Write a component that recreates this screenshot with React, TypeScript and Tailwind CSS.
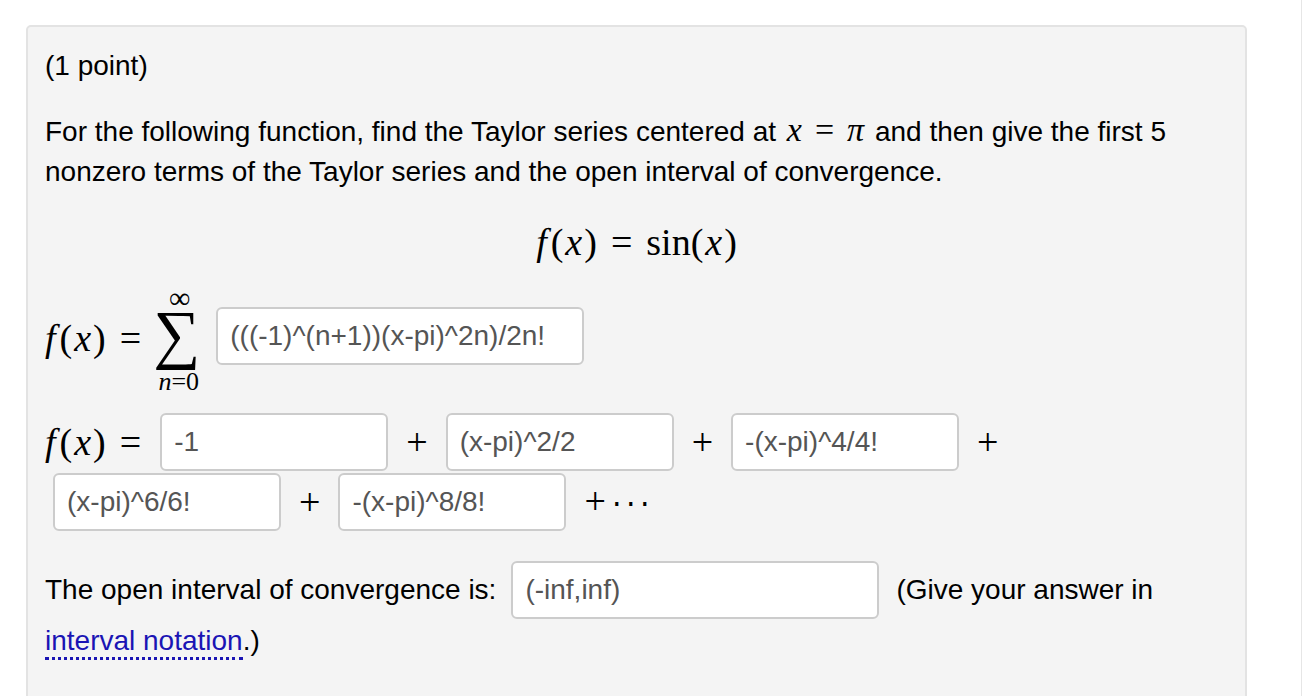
import React from "react";

const sans = "font-['Liberation_Sans',Arial,sans-serif]";
const serif = "font-['Liberation_Serif','Times_New_Roman',serif]";

function Answer({ value, w }: { value: string; w: string }) {
  return (
    <div
      className={`${w} h-[58px] shrink-0 flex items-center rounded-[6px] border-2 border-[#cccccc] bg-white pl-[12px] text-[28px] text-[#555555] ${sans}`}
    >
      {value}
    </div>
  );
}

function Fx({ eq = "mx-[14px] mr-[19px]" }: { eq?: string }) {
  return (
    <span className={`${serif} text-[38px] leading-[40px] text-black whitespace-nowrap`}>
      <i className="mr-[4px]">f</i>(<i className="mx-[2px]">x</i>)
      <span className={`inline-block ml-[14px] ${eq}`}>=</span>
    </span>
  );
}

function Plus({ dots }: { dots?: boolean }) {
  return (
    <span className={`${serif} text-[38px] leading-[40px] text-black mx-[18px] whitespace-nowrap`}>
      +{dots && <span className="ml-[6px] tracking-[4px] text-[30px]">⋅⋅⋅</span>}
    </span>
  );
}

export default function App() {
  return (
    <div className="flex min-h-[696px] w-[1304px] bg-white overflow-hidden">
      <div className="flex-1 pl-[26px] pt-[25px]">
        <div
          className={`w-[1221px] min-h-[700px] rounded-t-[5px] border-2 border-[#e3e3e3] bg-[#f4f4f4] pl-[17px] pr-[17px] pt-[19px] text-[28px] leading-[40px] text-black ${sans}`}
        >
          <p>(1 point)</p>

          <p className="mt-[26px] w-[1150px]">
            For the following function, find the Taylor series centered at{" "}
            <span className={`${serif} text-[34px] leading-[20px]`}>
              <i className="ml-[3px]">x</i>
              <span className="mx-[13px]">=</span>
              <i className="mr-[3px]">π</i>
            </span>{" "}
            and then give the first 5 nonzero terms of the Taylor series and the open interval of convergence.
          </p>

          <div className={`mt-[30px] flex justify-center ${serif} text-[38px]`}>
            <span>
              <i className="mr-[4px]">f</i>(<i className="mx-[2px]">x</i>)<span className="mx-[14px]">=</span>sin(
              <i className="mx-[2px]">x</i>)
            </span>
          </div>

          <div className="mt-[19px] flex items-center">
            <Fx eq="mr-[12px]" />
            <div className={`flex flex-col items-center ${serif} leading-none mt-[6px]`}>
              <span className="text-[30px] leading-[22px] ml-[6px]">∞</span>
              <span className="text-[66px] leading-[50px] pb-[10px]">∑</span>
              <span className="text-[26px] leading-[26px] ml-[4px]">
                <i>n</i>=0
              </span>
            </div>
            <div className="ml-[16px] mt-[-4px]">
              <Answer value="(((-1)^(n+1))(x-pi)^2n)/2n!" w="w-[368px]" />
            </div>
          </div>

          <div className="mt-[18px] flex items-center">
            <Fx />
            <Answer value="-1" w="w-[228px]" />
            <Plus />
            <Answer value="(x-pi)^2/2" w="w-[228px]" />
            <Plus />
            <Answer value="-(x-pi)^4/4!" w="w-[228px]" />
            <Plus />
          </div>

          <div className="mt-[2px] flex items-center pl-[8px]">
            <Answer value="(x-pi)^6/6!" w="w-[228px]" />
            <Plus />
            <Answer value="-(x-pi)^8/8!" w="w-[228px]" />
            <Plus dots />
          </div>

          <div className="mt-[30px] flex items-center">
            <span>The open interval of convergence is:</span>
            <div className="ml-[15px] mr-[17px]">
              <Answer value="(-inf,inf)" w="w-[368px]" />
            </div>
            <span>(Give your answer in</span>
          </div>
          <p className="mt-[2px]">
            <span className="text-[#1a14b4] border-b-[3px] border-dotted border-[#1a14b4] leading-[32px] inline-block">
              interval notation
            </span>
            .)
          </p>
        </div>
      </div>
      <div className="w-[3px] border-l border-[#e6e6e6] bg-white" />
    </div>
  );
}
